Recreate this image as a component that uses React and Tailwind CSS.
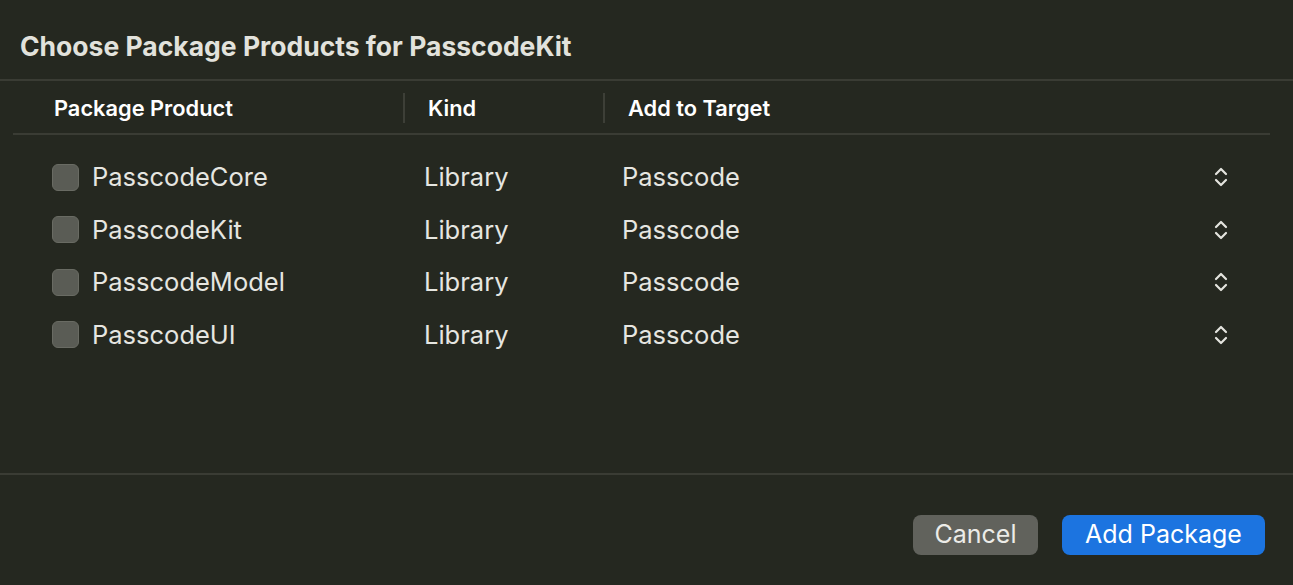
const rows = ['PasscodeCore', 'PasscodeKit', 'PasscodeModel', 'PasscodeUI'];

const Stepper = () => (
  <svg width="16" height="24" viewBox="0 0 16 24" fill="none" stroke="#e4e4de" strokeWidth="2.2" strokeLinecap="round" strokeLinejoin="round">
    <path d="M3 9 L8 4 L13 9" />
    <path d="M3 15 L8 20 L13 15" />
  </svg>
);

export default function App() {
  return (
    <div
      className="w-[1293px] h-[585px] bg-[#252820] text-[#e6e6e1] flex flex-col overflow-hidden"
      style={{ fontFamily: 'Inter, "Liberation Sans", sans-serif' }}
    >
      <div className="h-[79px] flex items-center pl-[20px] pt-[14px]">
        <h1 className="text-[26.5px] font-bold text-[#e2e2dc]">Choose Package Products for PasscodeKit</h1>
      </div>
      <div className="h-[2px] bg-[#3a3c34]" />

      <div className="mx-[13px] mr-[23px] h-[54px] flex items-center border-b-2 border-[#3a3c34] pt-[2px]">
        <div className="w-[390px] pl-[41px] text-[21.8px] font-semibold text-white">Package Product</div>
        <div className="w-[2px] h-[30px] bg-[#3d3f37]" />
        <div className="w-[198px] pl-[23px] text-[21.8px] font-semibold text-white">Kind</div>
        <div className="w-[2px] h-[30px] bg-[#3d3f37]" />
        <div className="pl-[23px] text-[21.8px] font-semibold text-white">Add to Target</div>
      </div>

      <div className="flex-1 flex flex-col pt-[16px]">
        {rows.map((name) => (
          <div key={name} className="h-[52.5px] flex items-center">
            <div className="w-[27px] h-[27px] ml-[52px] rounded-[6px] bg-[#5a5c55] border border-[#696b63]" />
            <div className="w-[345px] pl-[13px] text-[25.5px]">{name}</div>
            <div className="w-[198px] text-[25.5px]">Library</div>
            <div className="flex-1 text-[25.5px]">Passcode</div>
            <div className="mr-[64px] flex items-center">
              <Stepper />
            </div>
          </div>
        ))}
      </div>

      <div className="h-[2px] bg-[#3a3c34]" />
      <div className="h-[110px] flex items-start justify-end pt-[40px] pr-[28px] gap-[24px]">
        <button className="w-[125px] h-[40px] rounded-[8px] bg-[#61625c] text-[25px] text-[#ecece8]">Cancel</button>
        <button className="w-[203px] h-[40px] rounded-[8px] bg-[#1c74e0] text-[25px] text-white">Add Package</button>
      </div>
    </div>
  );
}
